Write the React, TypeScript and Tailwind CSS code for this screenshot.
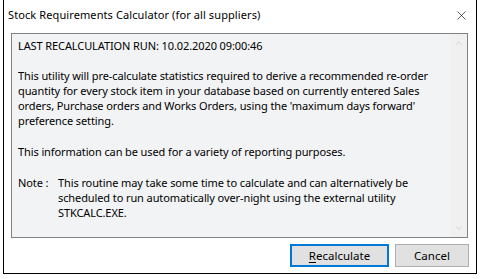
import { X, ChevronUp, ChevronDown } from "lucide-react";

const font = { fontFamily: '"Noto Sans", "Open Sans", sans-serif' };

function DialogButton({
  label,
  accessKey,
  primary,
}: {
  label: string;
  accessKey?: string;
  primary?: boolean;
}) {
  const rest = accessKey ? label.slice(1) : label;
  return (
    <button
      className={
        primary
          ? "h-[23px] w-[99px] border-2 border-[#0078d7] bg-[#e1e1e1] text-[11.5px] leading-none text-black"
          : "h-[23px] w-[74px] border border-[#adadad] bg-[#e1e1e1] text-[11.5px] leading-none text-black"
      }>
      {accessKey && <span className="underline underline-offset-2">{accessKey}</span>}
      {rest}
    </button>
  );
}

export default function App() {
  return (
    <div className="h-[279px] w-[481px] bg-white" style={font}>
      <div className="ml-[3px] flex h-[274px] w-[474px] flex-col border-x border-b border-black bg-white">
        {/* title bar */}
        <div className="flex h-[30px] items-center justify-between pl-[4px] pr-[7px]">
          <span className="text-[11px] tracking-[0.1px] text-black">
            Stock Requirements Calculator (for all suppliers)
          </span>
          <X size={15} strokeWidth={1} className="text-black" />
        </div>

        {/* info text box */}
        <div className="ml-[7px] mt-[3px] flex h-[205px] w-[457px] overflow-hidden border border-[#828282] bg-[#f2f3f5]">
          <div className="min-w-0 flex-1 whitespace-pre pl-[6px] pt-[4px] text-[11px] leading-[15px] tracking-[-0.1px] text-black">
            <div>LAST RECALCULATION RUN: 10.02.2020 09:00:46</div>
            <div className="mt-[15px]">
              {"This utility will pre-calculate statistics required to derive a recommended re-order\nquantity for every stock item in your database based on currently entered Sales\norders, Purchase orders and Works Orders, using the 'maximum days forward'\npreference setting."}
            </div>
            <div className="mt-[16px]">This information can be used for a variety of reporting purposes.</div>
            <div className="mt-[16px] flex">
              <span className="w-[40px]">Note :</span>
              <span>
                {"This routine may take some time to calculate and can alternatively be\nscheduled to run automatically over-night using the external utility\nSTKCALC.EXE."}
              </span>
            </div>
          </div>
          <div className="flex w-[17px] shrink-0 flex-col items-center justify-between bg-[#f0f0f0] py-[4px]">
            <ChevronUp size={10} strokeWidth={1.5} className="text-[#c0c0c0]" />
            <ChevronDown size={10} strokeWidth={1.5} className="text-[#c0c0c0]" />
          </div>
        </div>

        {/* buttons */}
        <div className="mt-[6px] flex justify-end gap-[6px] pr-[7px]">
          <DialogButton label="Recalculate" accessKey="R" primary />
          <DialogButton label="Cancel" />
        </div>
      </div>
    </div>
  );
}
